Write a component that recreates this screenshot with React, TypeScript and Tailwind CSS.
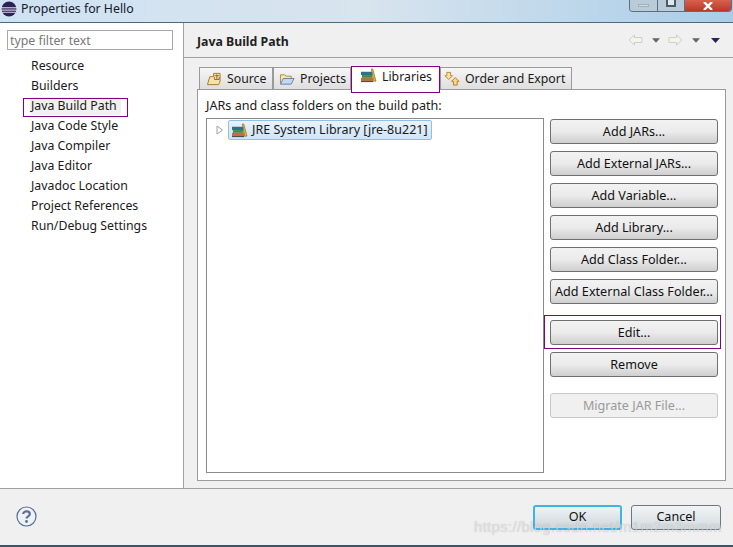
import React from 'react';

const FONT = 'font-["Noto_Sans","Open_Sans",sans-serif]';

const navItems = ['Resource', 'Builders', 'Java Build Path', 'Java Code Style', 'Java Compiler', 'Java Editor', 'Javadoc Location', 'Project References', 'Run/Debug Settings'];

const Books = () => (
  <svg width="17" height="15" viewBox="0 0 18 16" className="shrink-0">
    <path d="M12 1 L13.5 1 L17 14 L14.5 14 Z" fill="#e8b93a" stroke="#8a6a1c" strokeWidth="0.7" />
    <rect x="1" y="4" width="12" height="3.5" fill="#2f6f8f" />
    <rect x="2" y="7.5" width="11" height="3" fill="#3f8f4f" />
    <rect x="1" y="10.5" width="13" height="3.5" fill="#c0703a" />
    <path d="M1 14.5 H14" stroke="#333" strokeWidth="1" />
  </svg>
);

const SourceIcon = () => (
  <svg width="16" height="14" viewBox="0 0 17 15" className="shrink-0">
    <path d="M1.5 13.5 L4 5 H8 V1.5 H15 V10 L13.5 13.5 Z" fill="#f6e2b0" stroke="#a9732b" strokeWidth="1" />
    <path d="M9 4 H14 M11.5 2.5 V8 M9 8 H14 V5.5 M9 8 V5.5" stroke="#8a5a1c" strokeWidth="0.9" fill="none" />
  </svg>
);

const FolderIcon = () => (
  <svg width="16" height="14" viewBox="0 0 17 15" className="shrink-0">
    <path d="M1.5 13 V3 H6 L7.5 4.5 H13 V7" fill="#f5e6b5" stroke="#a98a3c" strokeWidth="1" />
    <path d="M1.5 13 L4.5 7 H16 L13 13 Z" fill="#c4d8f2" stroke="#5d7fb5" strokeWidth="1" />
  </svg>
);

const OrderIcon = () => (
  <svg width="16" height="15" viewBox="0 0 17 16" className="shrink-0">
    <path d="M3 1.5 H7 V5 H9 L5 9 L1 5 H3 Z" fill="#f7e3a8" stroke="#b9892c" strokeWidth="1" />
    <path d="M10 15 H14 V11 H16 L12 7 L8 11 H10 Z" fill="#f7d98a" stroke="#b9782c" strokeWidth="1" />
  </svg>
);

const NavArrow = ({ flip }: { flip?: boolean }) => (
  <svg width="15" height="12" viewBox="0 0 15 12" className={flip ? 'rotate-180' : ''}>
    <path d="M1 6 L6.5 1 V3.5 H14 V8.5 H6.5 V11 Z" fill="#f4f4ee" stroke="#cfcfc6" strokeWidth="1" />
  </svg>
);

const Caret = ({ color = '#666', width = 8 }: { color?: string; width?: number }) => (
  <svg width={width} height="5" viewBox="0 0 9 5">
    <path d="M0 0 H9 L4.5 5 Z" fill={color} />
  </svg>
);

const Tab = ({ icon, label, className }: { icon: React.ReactNode; label: string; className: string }) => (
  <div className={`${className} h-[22px] flex items-center gap-[5px] whitespace-nowrap border border-[#9a9a9a] border-b-0 bg-gradient-to-b from-[#f6f6f6] to-[#dedede]`}>
    {icon}
    <span>{label}</span>
  </div>
);

const Btn = ({ label, className = '', disabled }: { label: string; className?: string; disabled?: boolean }) => (
  <div
    className={`w-[168px] h-[25px] shrink-0 flex items-center justify-center rounded-[3px] border ${
      disabled
        ? 'border-[#c8c8c8] bg-[#f0f0f0] text-[#9a9a9a]'
        : 'border-[#707070] bg-gradient-to-b from-[#f2f2f2] via-[#ebebeb] to-[#cfcfcf] text-[#111]'
    } ${className}`}
  >
    {label}
  </div>
);

const App: React.FC = () => {
  return (
    <div className={`relative w-[733px] h-[547px] overflow-hidden flex flex-col bg-[#f0f0f0] text-[12.3px] leading-[18px] text-[#1a1a1a] ${FONT}`}>
      {/* title bar */}
      <div className="h-[23px] shrink-0 flex items-start justify-between bg-gradient-to-r from-[#cfe2f2] via-[#d8e4ee] to-[#a9cde8] border-b border-[#4a6a80]">
        <div className="flex items-center gap-[4px] pl-[1px] h-[17px]">
          <svg width="16" height="16" viewBox="0 0 16 16">
            <circle cx="8" cy="8" r="7.5" fill="#2c2255" />
            <rect x="0" y="6.3" width="16" height="1" fill="#f0eaf5" />
            <rect x="0" y="8.6" width="16" height="1" fill="#f0eaf5" />
            <rect x="0" y="10.8" width="16" height="1" fill="#d8d0e5" />
          </svg>
          <span className="text-[#10202c]">Properties for Hello</span>
        </div>
        <div className="flex h-[12px] mr-[1px] rounded-b-[4px] overflow-hidden border border-t-0 border-[#5d6f7d]">
          <div className="w-[28px] flex items-center justify-center bg-[#b9cbd8] border-r border-[#5d6f7d]">
            <div className="w-[11px] h-[3px] bg-[#d4dde3] border border-[#9fb0bb]" />
          </div>
          <div className="w-[27px] flex justify-center bg-[#b9cbd8] border-r border-[#5d6f7d]">
            <div className="w-[10px] h-[7px] border-2 border-t-0 border-[#4a5a66] bg-[#dfe7ec]" />
          </div>
          <div className="w-[46px] flex items-center justify-center bg-gradient-to-b from-[#d8604c] to-[#b8382a]">
            <svg width="12" height="8" viewBox="0 0 12 8">
              <path d="M2 0 L10 8 M10 0 L2 8" stroke="#fff" strokeWidth="2.4" />
            </svg>
          </div>
        </div>
      </div>

      <div className="flex-1 flex min-h-0">
        {/* left tree */}
        <div className="w-[184px] shrink-0 bg-white border-r border-[#a0a0a0] pt-[7px] pl-[7px]">
          <div className="w-[166px] h-[20px] border border-[#a8a8a8] flex items-center pl-[2px] pt-[1px] text-[#777]">type filter text</div>
          <div className="mt-[6px] flex flex-col">
            {navItems.map((item) => (
              <div key={item} className="h-[20px] flex items-center">
                <span
                  className={`ml-[23px] pl-[1px] pr-[4px] h-[18px] flex items-center ${
                    item === 'Java Build Path' ? 'bg-[#f0f0f0] rounded-[2px]' : ''
                  }`}
                >
                  {item}
                </span>
              </div>
            ))}
          </div>
        </div>

        {/* right side */}
        <div className="flex-1 flex flex-col min-w-0">
          <div className="h-[35px] shrink-0 flex items-center justify-between border-b border-[#a0a0a0] pl-[13px] pr-[13px]">
            <span className="font-bold text-[#222] pt-[4px]">Java Build Path</span>
            <div className="flex items-center">
              <NavArrow />
              <div className="ml-[9px]"><Caret /></div>
              <div className="ml-[8px]"><NavArrow flip /></div>
              <div className="ml-[9px]"><Caret /></div>
              <div className="ml-[11px]"><Caret color="#2c2255" width={9} /></div>
            </div>
          </div>

          <div className="flex-1 pt-[9px] pl-[13px] pr-[7px] pb-[7px] flex flex-col min-h-0">
            <div className="flex items-end h-[22px] shrink-0 pl-[2px] relative z-10">
              <Tab icon={<SourceIcon />} label="Source" className="w-[74px] pl-[6px]" />
              <Tab icon={<FolderIcon />} label="Projects" className="w-[78px] pl-[5px]" />
              <div className="w-[89px] h-[24px] -mb-[1px] flex items-start gap-[5px] pl-[9px] pt-[2px] bg-white">
                <Books />
                <span>Libraries</span>
              </div>
              <Tab icon={<OrderIcon />} label="Order and Export" className="w-[132px] pl-[3px]" />
            </div>
            <div className="flex-1 bg-white border border-[#9a9a9a] flex flex-col pl-[8px] pr-[7px] pt-[7px] pb-[7px] min-h-0 text-[12.6px]">
              <div className="h-[18px] shrink-0">JARs and class folders on the build path:</div>
              <div className="flex-1 flex mt-[3px] min-h-0">
                <div className="w-[338px] h-[355px] shrink-0 border border-[#8a8a8a] pl-[9px] pt-[1px] flex items-start">
                  <div className="h-[20px] flex items-center">
                    <svg width="8" height="10" viewBox="0 0 8 10" className="mr-[4px]">
                      <path d="M1 1 L6.5 5 L1 9 Z" fill="#fff" stroke="#a0a0a0" />
                    </svg>
                    <div className="h-[20px] w-[204px] flex items-center gap-[4px] pl-[2px] rounded-[2px] border border-[#8fc0ea] bg-gradient-to-b from-[#e8f3fc] to-[#cfe5f9] text-[12.5px]">
                      <Books />
                      <span className="whitespace-nowrap pb-[1px]">JRE System Library [jre-8u221]</span>
                    </div>
                  </div>
                </div>
                <div className="ml-[6px] pt-[1px] flex flex-col">
                  <Btn label="Add JARs..." />
                  <Btn label="Add External JARs..." className="mt-[7px]" />
                  <Btn label="Add Variable..." className="mt-[7px]" />
                  <Btn label="Add Library..." className="mt-[7px]" />
                  <Btn label="Add Class Folder..." className="mt-[7px]" />
                  <Btn label="Add External Class Folder..." className="mt-[7px]" />
                  <Btn label="Edit..." className="mt-[16px]" />
                  <Btn label="Remove" className="mt-[7px]" />
                  <Btn label="Migrate JAR File..." disabled className="mt-[16px]" />
                </div>
              </div>
            </div>
          </div>
        </div>
      </div>

      {/* footer */}
      <div className="h-[59px] shrink-0 border-t border-[#a0a0a0] border-b-2 border-b-[#3f5566] flex items-start justify-between pl-[16px] pr-[12px] pt-[16px] text-[12.6px]">
        <svg width="21" height="21" viewBox="0 0 21 21" className="mt-[1px]">
          <circle cx="10.5" cy="10.5" r="9.5" fill="#eef1f5" stroke="#5b6f92" strokeWidth="1.2" />
          <path d="M7.2 8 C7.2 4.6 13.8 4.6 13.8 8 C13.8 10.4 10.5 10.2 10.5 12.6" fill="none" stroke="#5b6f92" strokeWidth="2.2" />
          <circle cx="10.5" cy="15.5" r="1.4" fill="#5b6f92" />
        </svg>
        <div className="flex">
          <div className="w-[89px] h-[25px] flex items-center justify-center pb-[1px] rounded-[3px] border-2 border-[#3fb4e6] bg-gradient-to-b from-[#eef3f6] to-[#cfd6db] text-[#111]">OK</div>
          <div className="ml-[9px] w-[90px] h-[25px] flex items-center justify-center pb-[1px] rounded-[3px] border border-[#6f7880] bg-gradient-to-b from-[#f2f5f7] to-[#d3dbe0] text-[#111]">Cancel</div>
        </div>
      </div>

      {/* annotation boxes */}
      <div className="absolute left-[23px] top-[98px] w-[105px] h-[19px] border border-[#800080]" />
      <div className="absolute z-20 left-[351px] top-[66px] w-[89px] h-[27px] border border-[#800080]" />
      <div className="absolute left-[544px] top-[315px] w-[177px] h-[34px] border border-[#800080]" />

      {/* watermark */}
      <div className='absolute left-[474px] top-[518px] text-[15px] tracking-[0.3px] text-white/60 [text-shadow:0_0_1px_rgba(0,0,0,0.3)] font-["Liberation_Sans",sans-serif] whitespace-nowrap'>
        https://blog.csdn.net/m1m2m3mmm
      </div>
    </div>
  );
};

export default App;
